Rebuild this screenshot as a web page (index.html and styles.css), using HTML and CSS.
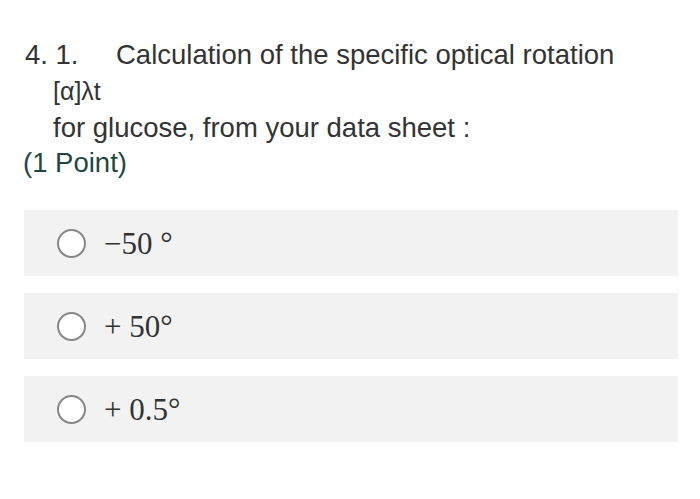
FILE: index.html
```html
<!DOCTYPE html>
<html>
<head>
<meta charset="utf-8">
<link rel="stylesheet" href="styles.css">
</head>
<body>
<div class="page">
  <div class="question">
    <div class="title"><span class="num">4. 1.</span><span class="lead">Calculation of the specific optical rotation</span></div>
    <div class="title sym">[α]λt</div>
    <div class="title">for glucose, from your data sheet :</div>
  </div>
  <div class="points">(1 Point)</div>
  <div class="options">
    <label class="option"><span class="radio"></span><span class="opt-text">−50 °</span></label>
    <label class="option"><span class="radio"></span><span class="opt-text">+ 50°</span></label>
    <label class="option"><span class="radio"></span><span class="opt-text">+ 0.5°</span></label>
  </div>
</div>
</body>
</html>
```

FILE: styles.css
```css
html, body {
  margin: 0;
  padding: 0;
  background: #ffffff;
}

.page {
  width: 700px;
  height: 499px;
  padding: 37px 22px 0 24px;
  box-sizing: border-box;
  font-family: "Liberation Sans", Arial, sans-serif;
}

.question {
  padding-left: 29px;
  color: #333333;
  font-size: 27.5px;
  line-height: 35px;
}

.title {
  white-space: nowrap;
}

.title:first-child {
  margin-left: -28px;
}

.num {
  display: inline-block;
  width: 91px;
}

.sym {
  font-size: 25px;
  line-height: 38px;
}

.points {
  color: #1f4743;
  font-size: 27.5px;
  line-height: 35px;
  margin-left: -1px;
}

.options {
  margin-top: 30px;
  display: flex;
  flex-direction: column;
  gap: 17px;
}

.option {
  display: flex;
  align-items: center;
  height: 66px;
  background: #f2f2f2;
  padding-left: 33px;
  box-sizing: border-box;
}

.radio {
  width: 29px;
  height: 29px;
  box-sizing: border-box;
  border: 2.5px solid #878787;
  border-radius: 50%;
  background: #ffffff;
  flex: none;
}

.opt-text {
  margin-left: 18px;
  font-family: "Liberation Serif", "Times New Roman", serif;
  font-size: 31px;
  color: #333333;
  position: relative;
  top: 1px;
}
```
